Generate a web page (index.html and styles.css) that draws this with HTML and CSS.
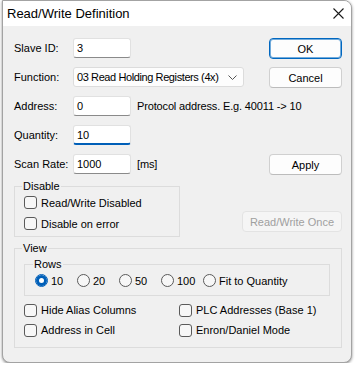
FILE: index.html
```html
<!DOCTYPE html>
<html lang="en">
  <head>
    <meta charset="UTF-8" />
    <title>Read/Write Definition</title>
    <link rel="stylesheet" href="styles.css">
  </head>
  <body>
    <div class="window">
      <div class="titlebar">
        <span class="title">Read/Write Definition</span>
        <svg class="close" width="11" height="11" viewBox="0 0 11 11">
          <path d="M0.5 0.5 L10.5 10.5 M10.5 0.5 L0.5 10.5" stroke="#1a1a1a" stroke-width="1.1" fill="none" />
        </svg>
      </div>

      <div class="content">
        <div class="field-row">
          <span class="label">Slave ID:</span>
          <div class="input">3</div>
          <button class="btn btn-default">OK</button>
        </div>
        <div class="field-row">
          <span class="label">Function:</span>
          <div class="select">
            <span class="select-text">03 Read Holding Registers (4x)</span>
            <svg width="9" height="5" viewBox="0 0 9 5">
              <path d="M0.5 0.5 L4.5 4.5 L8.5 0.5" stroke="#555" stroke-width="1" fill="none" />
            </svg>
          </div>
          <button class="btn">Cancel</button>
        </div>
        <div class="field-row">
          <span class="label">Address:</span>
          <div class="input">0</div>
          <span class="hint">Protocol address. E.g. 40011 -&gt; 10</span>
        </div>
        <div class="field-row">
          <span class="label">Quantity:</span>
          <div class="input focused">10</div>
        </div>
        <div class="field-row last">
          <span class="label">Scan Rate:</span>
          <div class="input">1000</div>
          <span class="hint">[ms]</span>
          <button class="btn">Apply</button>
        </div>

        <div class="group-row">
          <fieldset class="group disable">
            <legend>Disable</legend>
            <div class="check-row"><span class="check"></span>Read/Write Disabled</div>
            <div class="check-row"><span class="check"></span>Disable on error</div>
          </fieldset>
          <button class="btn btn-wide" disabled>Read/Write Once</button>
        </div>

        <fieldset class="group view">
          <legend>View</legend>
          <fieldset class="group rows">
            <legend>Rows</legend>
            <div class="radio-row">
              <div class="radio-item"><span class="radio checked"></span>10</div>
              <div class="radio-item"><span class="radio"></span>20</div>
              <div class="radio-item"><span class="radio"></span>50</div>
              <div class="radio-item"><span class="radio"></span>100</div>
              <div class="radio-item"><span class="radio"></span>Fit to Quantity</div>
            </div>
          </fieldset>
          <div class="options">
            <div class="check-row"><span class="check"></span>Hide Alias Columns</div>
            <div class="check-row"><span class="check"></span>PLC Addresses (Base 1)</div>
            <div class="check-row"><span class="check"></span>Address in Cell</div>
            <div class="check-row"><span class="check"></span>Enron/Daniel Mode</div>
          </div>
        </fieldset>
      </div>
    </div>
  </body>
</html>
```

FILE: styles.css
```css
* {
  box-sizing: border-box;
}

body {
  margin: 0;
  background: #fff;
  font-family: "Liberation Sans", Arial, sans-serif;
  font-size: 11px;
  color: #000;
}

.window {
  margin-left: 2px;
  width: 350px;
  height: 363px;
  border: 1px solid #a3a3a3;
  border-radius: 0 8px 8px 8px;
  background: #f0f0f0;
  overflow: hidden;
  box-shadow: 0 1px 3px rgba(0, 0, 0, 0.45);
}

.titlebar {
  height: 25px;
  background: #fff;
  display: flex;
  align-items: center;
  justify-content: space-between;
  padding: 0 7px 0 4px;
}

.title {
  font-size: 13px;
}

.content {
  padding: 12px 9px 0 11px;
}

.field-row {
  display: flex;
  align-items: flex-start;
  height: 29px;
}

.field-row.last {
  height: 26px;
}

.label {
  width: 59px;
  line-height: 20px;
}

.input {
  width: 58px;
  height: 20px;
  background: #fff;
  border: 1px solid #e1e1e1;
  border-bottom-color: #8a8a8a;
  border-radius: 3px;
  padding: 0 3px;
  line-height: 18px;
}

.input.focused {
  border-bottom: 2px solid #005fb8;
}

.select {
  width: 171px;
  height: 20px;
  display: flex;
  align-items: center;
  justify-content: space-between;
  background: #fdfdfd;
  border: 1px solid #dcdcdc;
  border-radius: 3px;
  padding: 0 6px 0 3px;
  white-space: nowrap;
}

.select-text {
  letter-spacing: -0.4px;
}

.hint {
  margin-left: 6px;
  line-height: 20px;
  letter-spacing: -0.15px;
}

.btn {
  margin-left: auto;
  width: 73px;
  height: 21px;
  padding: 0;
  font-family: inherit;
  font-size: 11px;
  color: #000;
  background: #fdfdfd;
  border: 1px solid #d0d0d0;
  border-bottom-color: #bcbcbc;
  border-radius: 4px;
}

.btn-default {
  border-color: #0067c0;
  box-shadow: inset 0 0 0 1px rgba(0, 103, 192, 0.55);
}

.btn-wide {
  width: 100px;
  margin-bottom: 5px;
}

.btn:disabled {
  color: #a0a0a0;
  background: #f5f5f5;
  border-color: #e3e3e3;
}

.group {
  margin: 0;
  border: 1px solid #dcdcdc;
  min-width: 0;
}

.group legend {
  padding: 0 1px;
  margin-left: -2px;
  line-height: 12px;
}

.group-row {
  display: flex;
  align-items: flex-end;
}

.disable {
  width: 166px;
  padding: 0 0 2px 9px;
}

.check-row {
  display: flex;
  align-items: center;
  gap: 4px;
  height: 21px;
  white-space: nowrap;
}

.check {
  width: 13px;
  height: 13px;
  border: 1px solid #5a5a5a;
  border-radius: 3px;
  background: #f7f7f7;
  flex: none;
}

.view {
  margin-top: 5px;
  padding: 0 12px 7px 9px;
}

.rows {
  margin-top: 4px;
  width: 306px;
  padding: 0 0 4px 10px;
}

.radio-row {
  display: flex;
  height: 21px;
}

.radio-item {
  width: 42px;
  display: flex;
  align-items: center;
  gap: 3px;
  white-space: nowrap;
}

.radio {
  width: 13px;
  height: 13px;
  border: 1px solid #5a5a5a;
  border-radius: 50%;
  background: #f7f7f7;
  flex: none;
}

.radio.checked {
  border-color: #005fb8;
  background: #fff;
  box-shadow: inset 0 0 0 3px #005fb8;
}

.options {
  margin-top: 4px;
  display: grid;
  grid-template-columns: 155px 1fr;
}

.options .check-row {
  height: 20px;
}
```
